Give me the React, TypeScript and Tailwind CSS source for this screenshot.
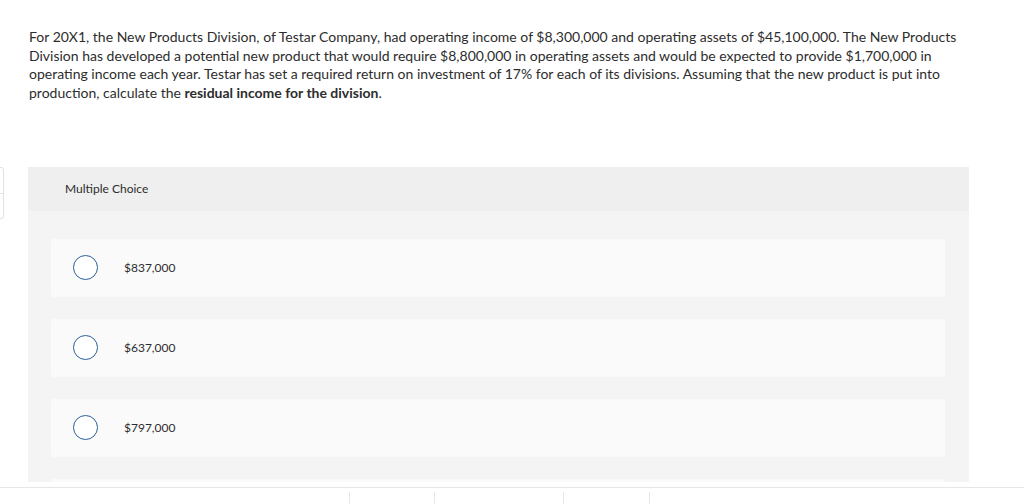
import React from "react";

const options = ["$837,000", "$637,000", "$797,000", ""];

export default function App() {
  return (
    <div
      className="w-[1024px] h-[504px] overflow-hidden bg-white text-[#2d2d2d] flex flex-col"
      style={{ fontFamily: "Lato, 'Open Sans', Arial, sans-serif" }}
    >
      <div className="h-[482px] shrink-0 overflow-hidden">
        <div className="pl-[29px] pt-[28px] text-[14px] leading-[18.7px]">
          <p className="whitespace-nowrap">
            For 20X1, the New Products Division, of Testar Company, had operating income of $8,300,000 and operating assets of $45,100,000. The New Products
          </p>
          <p className="whitespace-nowrap">
            Division has developed a potential new product that would require $8,800,000 in operating assets and would be expected to provide $1,700,000 in
          </p>
          <p className="whitespace-nowrap">
            operating income each year. Testar has set a required return on investment of 17% for each of its divisions. Assuming that the new product is put into
          </p>
          <p className="whitespace-nowrap">
            production, calculate the <b className="font-bold">residual income for the division</b>.
          </p>
        </div>

        <div className="mt-[64px] flex gap-[24px] items-start">
          <div className="w-[4px] h-[52px] rounded-r-[3px] border border-l-0 border-[#e2e2e2] flex flex-col">
            <div className="h-[26px] border-b border-[#e2e2e2]" />
          </div>
          <div className="w-[941px] h-[400px] bg-[#f4f4f4]">
            <div className="h-[44px] bg-[#efefef] flex items-center pl-[37px] text-[12px]">
              Multiple Choice
            </div>
            <div className="pl-[23px] pr-[24px] pt-[28px] flex flex-col gap-[22px]">
              {options.map((o, i) => (
                <div key={i} className="h-[58px] shrink-0 rounded-[3px] bg-[#fafafa] flex items-center">
                  <span className="ml-[22px] w-[25px] h-[25px] rounded-full border border-[#2b5f95] bg-white" />
                  <span className="ml-[26px] text-[12px]">{o}</span>
                </div>
              ))}
            </div>
          </div>
        </div>
      </div>

      <div className="mt-[5px] flex-1 border-t border-[#e6e6e6] flex items-end">
        <div className="ml-[349px] h-[12px] w-[85px] border-l border-[#e6e6e6]" />
        <div className="h-[12px] w-[129px] border-l border-[#e6e6e6]" />
        <div className="h-[12px] w-[86px] border-l border-[#e6e6e6]" />
        <div className="h-[12px] border-l border-[#e6e6e6]" />
      </div>
    </div>
  );
}
